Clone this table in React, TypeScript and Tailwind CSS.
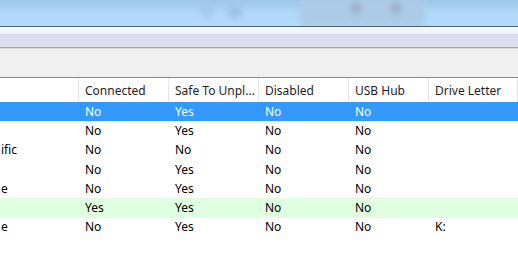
import React from "react";

type Row = {
  name: string;
  cells: string[];
  tone?: "selected" | "green";
};

const columns = [
  { label: "", width: "w-[79px]" },
  { label: "Connected", width: "w-[90px]" },
  { label: "Safe To Unpl...", width: "w-[90px]" },
  { label: "Disabled", width: "w-[90px]" },
  { label: "USB Hub", width: "w-[80px]" },
  { label: "Drive Letter", width: "flex-1" },
];

const rows: Row[] = [
  { name: "", cells: ["No", "Yes", "No", "No", ""], tone: "selected" },
  { name: "", cells: ["No", "Yes", "No", "No", ""] },
  { name: "ific", cells: ["No", "No", "No", "No", ""] },
  { name: "", cells: ["No", "Yes", "No", "No", ""] },
  { name: "e", cells: ["No", "Yes", "No", "No", ""] },
  { name: "", cells: ["Yes", "Yes", "No", "No", ""], tone: "green" },
  { name: "e", cells: ["No", "Yes", "No", "No", "K:"] },
];

export default function App() {
  return (
    <div
      className="flex h-[272px] w-[518px] flex-col overflow-hidden bg-white text-[12px] text-black"
      style={{ fontFamily: '"Noto Sans", "Open Sans", sans-serif' }}
    >
      {/* glass title bar with the blurred window behind it */}
      <div className="relative h-[26px] shrink-0 overflow-hidden bg-gradient-to-b from-[#9fc7e8] via-[#b0d8f9] to-[#b2daf9]">
        <div className="absolute top-[-4px] left-[300px] h-[30px] w-[125px] rounded-sm bg-[#abcbe6] blur-[3px]" />
        <div className="absolute top-[6px] left-[200px] h-[10px] w-[14px] rounded-full bg-[#a3c7e6] blur-[3px]" />
        <div className="absolute top-[6px] left-[228px] h-[12px] w-[14px] rounded-full bg-[#9ac0e0] blur-[3px]" />
        <div className="absolute top-[3px] left-[350px] h-[10px] w-[12px] rounded-full bg-[#98b0c8] blur-[3px]" />
        <div className="absolute top-[3px] left-[390px] h-[10px] w-[12px] rounded-full bg-[#98b0c8] blur-[3px]" />
      </div>
      <div className="h-px shrink-0 bg-[#4e5d6c]" />

      {/* toolbar strip */}
      <div className="flex h-[20px] shrink-0 flex-col">
        <div className="h-[7px] bg-gradient-to-b from-[#f6f8fb] to-[#eef1f8]" />
        <div className="flex-1 bg-[#dadeef]" />
      </div>
      <div className="h-px shrink-0 bg-[#a4a4a4]" />
      <div className="h-px shrink-0 bg-[#d8d8d8]" />

      {/* empty band above the list */}
      <div className="h-[28px] shrink-0 bg-[#f0f0f0]" />
      <div className="h-px shrink-0 bg-[#828790]" />

      {/* column header */}
      <div className="flex h-[24px] shrink-0 bg-white">
        {columns.map((c, i) => (
          <div
            key={i}
            className={`${c.width} flex items-center border-r border-[#e5e5e5] pt-px pl-[6px] text-[#1e1e1e] whitespace-nowrap`}
          >
            {c.label}
          </div>
        ))}
      </div>

      {/* rows */}
      {rows.map((r, i) => (
        <div
          key={i}
          className={
            "flex h-[19.3px] shrink-0 items-center " +
            (r.tone === "selected"
              ? "bg-[#3399ff] text-white"
              : r.tone === "green"
                ? "bg-[#e0ffe0]"
                : "")
          }
        >
          <div className="w-[79px] overflow-hidden whitespace-nowrap pl-[1px]">{r.name}</div>
          <div className="w-[90px] pl-[6px]">{r.cells[0]}</div>
          <div className="w-[90px] pl-[6px]">{r.cells[1]}</div>
          <div className="w-[90px] pl-[6px]">{r.cells[2]}</div>
          <div className="w-[80px] pl-[6px]">{r.cells[3]}</div>
          <div className="flex-1 pl-[6px]">{r.cells[4]}</div>
        </div>
      ))}
    </div>
  );
}
